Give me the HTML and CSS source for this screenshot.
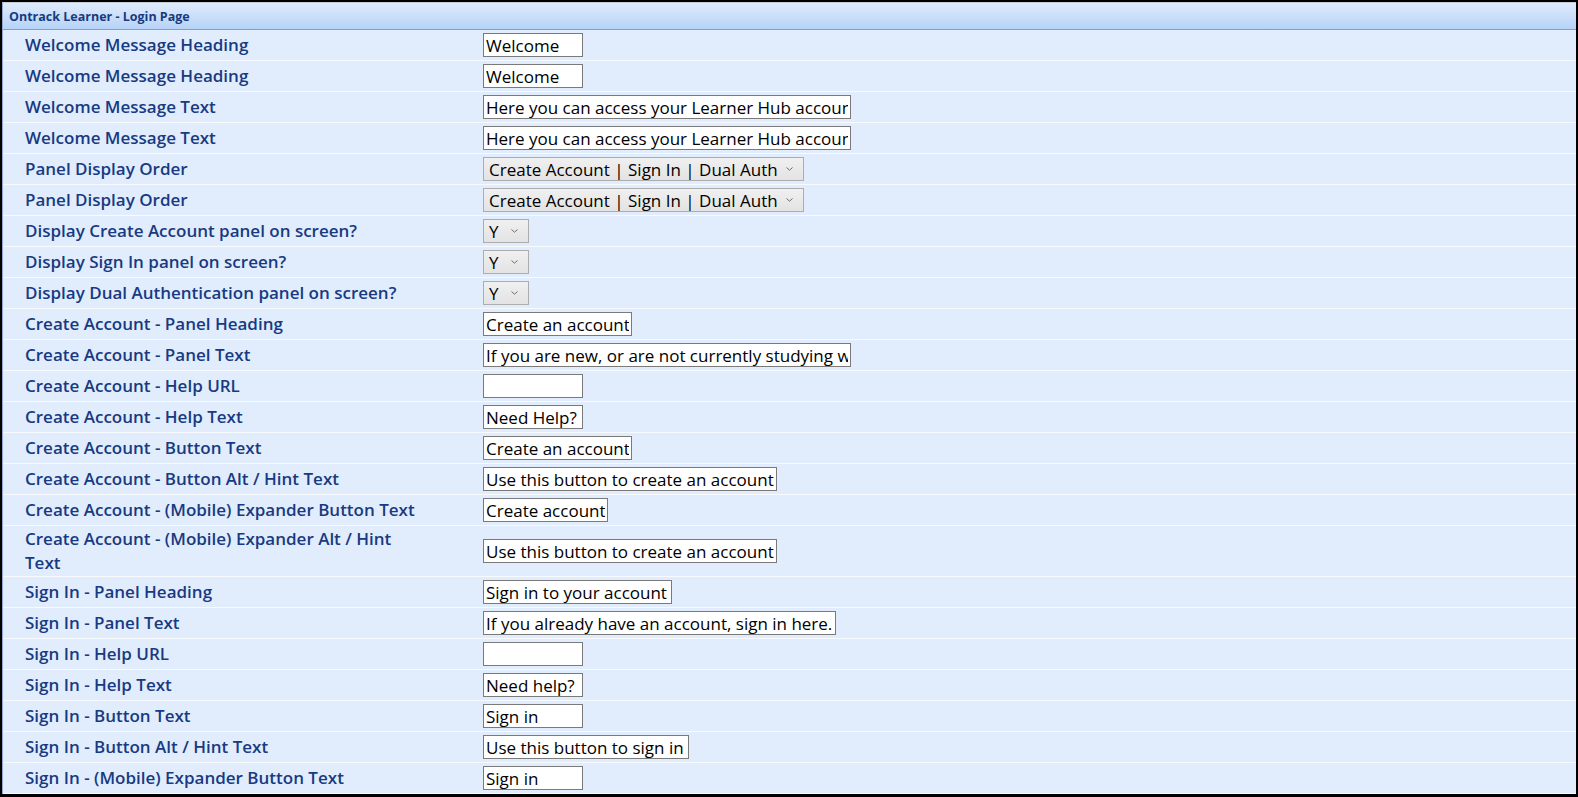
FILE: index.html
```html
<!DOCTYPE html>
<html lang="en">
<head>
    <meta charset="UTF-8">
    <title>Ontrack Learner - Login Page</title>
    <link rel="stylesheet" href="styles.css">
</head>
<body>

    <div class="panel">
        <!-- Panel title bar -->
        <div class="panel-header">Ontrack Learner - Login Page</div>

        <!-- Settings rows -->
        <div class="row">
            <label class="field-label">Welcome Message Heading</label>
            <input type="text" class="box w100" value="Welcome">
        </div>
        <div class="row">
            <label class="field-label">Welcome Message Heading</label>
            <input type="text" class="box w100" value="Welcome">
        </div>
        <div class="row">
            <label class="field-label">Welcome Message Text</label>
            <input type="text" class="box w368" value="Here you can access your Learner Hub account">
        </div>
        <div class="row">
            <label class="field-label">Welcome Message Text</label>
            <input type="text" class="box w368" value="Here you can access your Learner Hub account">
        </div>
        <div class="row">
            <label class="field-label">Panel Display Order</label>
            <div class="dropdown w321">
                <span>Create Account | Sign In | Dual Auth</span>
                <svg class="chevron" width="7" height="4" viewBox="0 0 7 4"><path d="M0.5 0.5 L3.5 3.2 L6.5 0.5" fill="none" stroke="#6d6d6d" stroke-width="1"/></svg>
            </div>
        </div>
        <div class="row">
            <label class="field-label">Panel Display Order</label>
            <div class="dropdown w321">
                <span>Create Account | Sign In | Dual Auth</span>
                <svg class="chevron" width="7" height="4" viewBox="0 0 7 4"><path d="M0.5 0.5 L3.5 3.2 L6.5 0.5" fill="none" stroke="#6d6d6d" stroke-width="1"/></svg>
            </div>
        </div>
        <div class="row">
            <label class="field-label">Display Create Account panel on screen?</label>
            <div class="dropdown w46">
                <span>Y</span>
                <svg class="chevron" width="7" height="4" viewBox="0 0 7 4"><path d="M0.5 0.5 L3.5 3.2 L6.5 0.5" fill="none" stroke="#6d6d6d" stroke-width="1"/></svg>
            </div>
        </div>
        <div class="row">
            <label class="field-label">Display Sign In panel on screen?</label>
            <div class="dropdown w46">
                <span>Y</span>
                <svg class="chevron" width="7" height="4" viewBox="0 0 7 4"><path d="M0.5 0.5 L3.5 3.2 L6.5 0.5" fill="none" stroke="#6d6d6d" stroke-width="1"/></svg>
            </div>
        </div>
        <div class="row">
            <label class="field-label">Display Dual Authentication panel on screen?</label>
            <div class="dropdown w46">
                <span>Y</span>
                <svg class="chevron" width="7" height="4" viewBox="0 0 7 4"><path d="M0.5 0.5 L3.5 3.2 L6.5 0.5" fill="none" stroke="#6d6d6d" stroke-width="1"/></svg>
            </div>
        </div>
        <div class="row">
            <label class="field-label">Create Account - Panel Heading</label>
            <input type="text" class="box w149" value="Create an account">
        </div>
        <div class="row">
            <label class="field-label">Create Account - Panel Text</label>
            <input type="text" class="box w368" value="If you are new, or are not currently studying with us">
        </div>
        <div class="row">
            <label class="field-label">Create Account - Help URL</label>
            <input type="text" class="box w100" value="">
        </div>
        <div class="row">
            <label class="field-label">Create Account - Help Text</label>
            <input type="text" class="box w100" value="Need Help?">
        </div>
        <div class="row">
            <label class="field-label">Create Account - Button Text</label>
            <input type="text" class="box w149" value="Create an account">
        </div>
        <div class="row">
            <label class="field-label">Create Account - Button Alt / Hint Text</label>
            <input type="text" class="box w294" value="Use this button to create an account">
        </div>
        <div class="row">
            <label class="field-label">Create Account - (Mobile) Expander Button Text</label>
            <input type="text" class="box w125" value="Create account">
        </div>
        <div class="row">
            <label class="field-label">Create Account - (Mobile) Expander Alt / Hint Text</label>
            <input type="text" class="box w294" value="Use this button to create an account">
        </div>
        <div class="row">
            <label class="field-label">Sign In - Panel Heading</label>
            <input type="text" class="box w189" value="Sign in to your account">
        </div>
        <div class="row">
            <label class="field-label">Sign In - Panel Text</label>
            <input type="text" class="box w353" value="If you already have an account, sign in here.">
        </div>
        <div class="row">
            <label class="field-label">Sign In - Help URL</label>
            <input type="text" class="box w100" value="">
        </div>
        <div class="row">
            <label class="field-label">Sign In - Help Text</label>
            <input type="text" class="box w100" value="Need help?">
        </div>
        <div class="row">
            <label class="field-label">Sign In - Button Text</label>
            <input type="text" class="box w100" value="Sign in">
        </div>
        <div class="row">
            <label class="field-label">Sign In - Button Alt / Hint Text</label>
            <input type="text" class="box w206" value="Use this button to sign in">
        </div>
        <div class="row">
            <label class="field-label">Sign In - (Mobile) Expander Button Text</label>
            <input type="text" class="box w100" value="Sign in">
        </div>
    </div>

</body>
</html>
```

FILE: styles.css
```css
body {
    margin: 0;
    background-color: black;
    font-family: "Open Sans", "Noto Sans", sans-serif;
    height: 797px;
    overflow: hidden;
}

/* Outer panel */
.panel {
    margin: 2px 2px 0 2px;
    border-top: 1px solid #c4ccd8;
    border-left: 1px solid #8ea8cf;
    background-color: #e1edfd;
}

/* Title bar */
.panel-header {
    height: 26px;
    line-height: 28px;
    padding-left: 6px;
    font-size: 12.5px;
    font-weight: 700;
    color: #183a80;
    background: linear-gradient(to bottom, #dfebfc, #b6d3f8);
    border-bottom: 1px solid #7c9fd4;
}

/* One setting per row */
.row {
    display: flex;
    align-items: center;
    min-height: 28px;
    padding: 1px 0;
    border-bottom: 1px solid #f7fbff;
}

.field-label {
    width: 480px;
    padding-left: 22px;
    padding-right: 58px;
    box-sizing: border-box;
    flex-shrink: 0;
    font-size: 17px;
    font-weight: 600;
    line-height: 24px;
    color: #183a82;
}

/* Text boxes */
.box {
    height: 24px;
    box-sizing: border-box;
    margin: 0;
    padding: 0 2px;
    border: 1px solid #7a7a7a;
    background: white;
    font-family: "Open Sans", "Noto Sans", sans-serif;
    font-size: 17px;
    color: black;
    outline: none;
}

/* Drop downs */
.dropdown {
    display: flex;
    align-items: center;
    justify-content: space-between;
    height: 24px;
    box-sizing: border-box;
    padding: 0 10px 0 5px;
    border: 1px solid #adadad;
    background: linear-gradient(to bottom, #f0f0f0, #e3e3e3);
    font-size: 17px;
    color: black;
}

.chevron {
    flex-shrink: 0;
}

.w46 { width: 46px; }
.w100 { width: 100px; }
.w125 { width: 125px; }
.w149 { width: 149px; }
.w189 { width: 189px; }
.w206 { width: 206px; }
.w294 { width: 294px; }
.w321 { width: 321px; }
.w353 { width: 353px; }
.w368 { width: 368px; }
```
